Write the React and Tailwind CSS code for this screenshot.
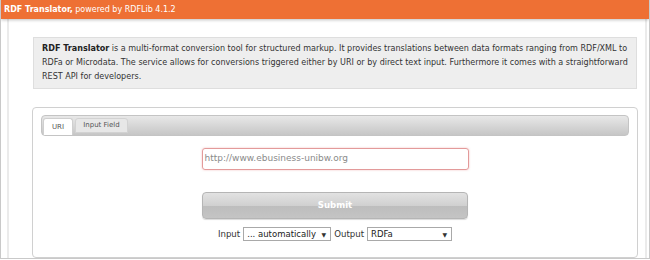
import React from "react";

function Select({ value, width }) {
	return (
		<div
			className={`flex items-center justify-between h-[14px] border border-[#a9a9a9] bg-white pl-[3px] pr-[4px] text-[8.5px] text-[#222] ${width}`}
		>
			<span>{value}</span>
			<span className="text-[6px] text-[#333]">▼</span>
		</div>
	);
}

function App() {
	return (
		<div className="w-[650px] h-[259px] flex flex-col overflow-hidden bg-white border-x border-b border-[#c9c9c9] font-['DejaVu_Sans',Verdana,sans-serif]">
			{/* Orange top bar */}
			<div className="h-[19px] shrink-0 bg-[#ee7034] px-[3px] text-[8px] leading-[19px] text-white shadow-[0_1px_3px_rgba(0,0,0,0.25)] relative z-10">
				<span className="font-bold">RDF Translator,</span> powered by RDFLib 4.1.2
			</div>

			{/* Page body */}
			<div className="flex-1 ml-[6px] mr-[2px] border-x-2 border-[#ebebeb] pt-[18px] pl-[24px] pr-[8px]">
				{/* Intro box */}
				<div className="border border-[#dedede] bg-[#eeeeee] pl-[8px] pr-[4px] py-[4px] text-[8.05px] leading-[14px] text-[#333]">
					<b className="text-[#222]">RDF Translator</b> is a multi-format conversion tool for structured markup. It provides translations between data formats ranging from RDF/XML to
					<br />
					RDFa or Microdata. The service allows for conversions triggered either by URI or by direct text input. Furthermore it comes with a straightforward
					<br />
					REST API for developers.
				</div>

				{/* Form panel */}
				<div className="mt-[18px] -mx-[1px] border border-[#d0d0d0] rounded-[4px] px-[8px] pt-[7px] pb-[16px]">
					{/* Tabs */}
					<div className="h-[21px] rounded-[4px] border border-[#c4c4c4] bg-gradient-to-b from-[#e8e8e8] to-[#c6c6c6] flex items-end gap-[2px] pl-[1px]">
						<div className="h-[17px] w-[30px] bg-white border border-b-0 border-[#cfcfcf] rounded-t-[3px] flex items-center justify-center text-[7px] text-[#555]">
							URI
						</div>
						<div className="h-[15px] w-[53px] mb-[2px] bg-[#e7e7e7] border border-[#d2d2d2] rounded-t-[3px] flex items-center justify-center text-[7px] text-[#555]">
							Input Field
						</div>
					</div>

					{/* URI form */}
					<div className="flex flex-col items-center">
						<div className="mt-[12px] w-[267px] h-[22px] rounded-[3px] border border-[#e39a9a] shadow-[0_0_2px_rgba(230,120,120,0.5)] flex items-center pl-[2px] text-[9px] text-[#8a8a8a]">
							http://www.ebusiness-unibw.org
						</div>

						<div className="mt-[22px] w-[266px] h-[27px] rounded-[4px] border border-[#b5b5b5] bg-[linear-gradient(to_bottom,#e2e2e2_0%,#d0d0d0_50%,#bdbdbd_51%,#c4c4c4_100%)] flex items-center justify-center text-[8.6px] font-bold text-white shadow-[0_1px_1px_rgba(0,0,0,0.15)]">
							Submit
						</div>

						<div className="mt-[8px] flex items-center gap-[3px] text-[8.6px] text-[#333]">
							<span>Input</span>
							<Select value="... automatically" width="w-[88px]" />
							<span>Output</span>
							<Select value="RDFa" width="w-[85px]" />
						</div>
					</div>
				</div>
			</div>
		</div>
	);
}

export default App;
